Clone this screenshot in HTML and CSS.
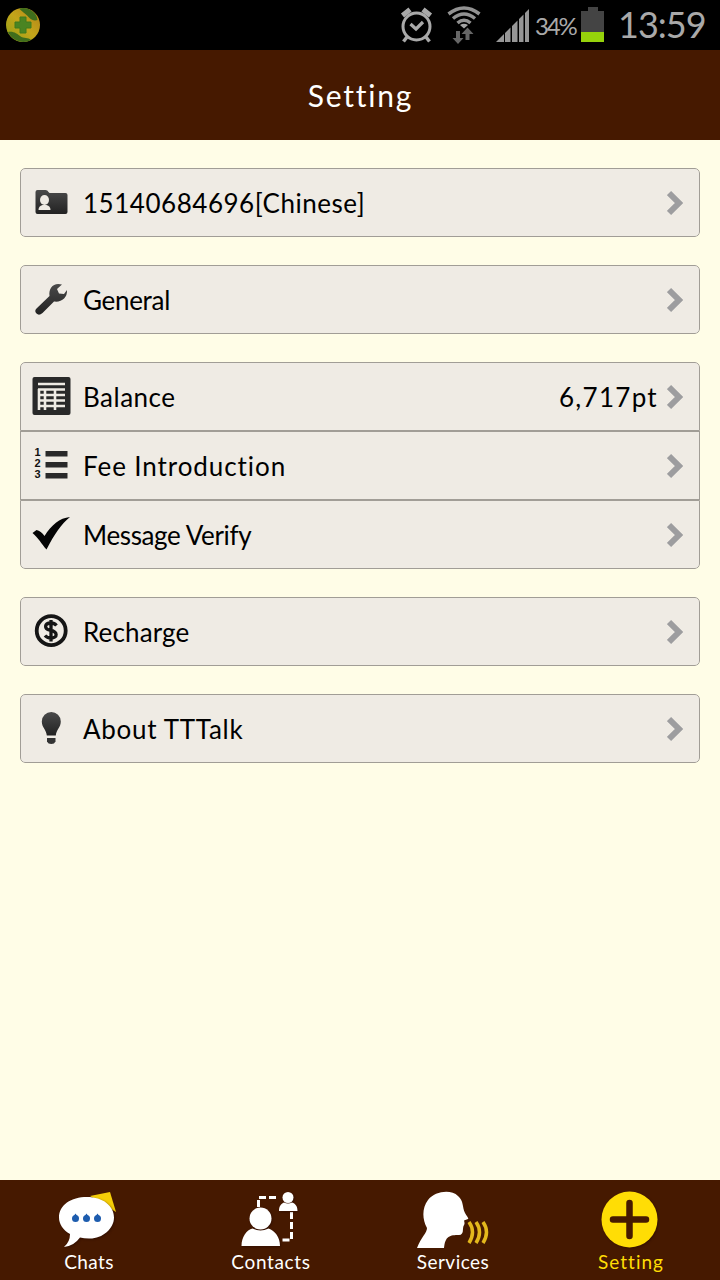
FILE: index.html
```
<!DOCTYPE html>
<html lang="en">
<head>
<meta charset="utf-8">
<title>Setting</title>
<link rel="stylesheet" href="styles.css">
</head>
<body>
<svg class="defs" aria-hidden="true">
  <defs>
    <linearGradient id="ball" x1="0" y1="1" x2="1" y2="0"><stop offset="0" stop-color="#8fa016"/><stop offset=".5" stop-color="#c4a51a"/><stop offset="1" stop-color="#b08018"/></linearGradient>
    <linearGradient id="dark" x1="0" y1="0" x2="0" y2="1"><stop offset="0" stop-color="#4a4a4a"/><stop offset="1" stop-color="#222"/></linearGradient>
    <symbol id="chevron" viewBox="0 0 16 26"><path d="M2 3 12 13 2 23" fill="none" stroke="#9d9d9f" stroke-width="6"/></symbol>
  </defs>
</svg>
<div class="screen">
  <div class="status">
    <svg class="app-ball" width="36" height="36" viewBox="0 0 36 36">
      <circle cx="18" cy="18" r="17" fill="url(#ball)"/>
      <path d="M14 1.500C24-1 32 6 32.500 13c-3 1-6 0-8-2-3-4-6-5-10.500-9.500z" fill="#3f6d1c"/>
      <path d="M3 25c6-1 9 2 12 4 4 3 8 1 11 4-7 4-18 2-23-8z" fill="#3f6d1c"/>
      <path d="M15 10h6v5h5v6h-5v5h-6v-5h-5v-6h5z" fill="#4a8422" stroke="#3f7a1d" stroke-linejoin="round"/>
    </svg>
    <svg class="alarm" width="34" height="36" viewBox="0 0 34 36" fill="none" stroke="#a9a9a9">
      <circle cx="16.500" cy="19.500" r="13.500" stroke-width="3"/>
      <path d="M10.500 17l5.500 5 7-7" stroke-width="3.200"/>
      <path d="M2.500 8.500 10 2.500M30.500 8.500 23 2.500" stroke-width="5"/>
      <path d="M7 30l-3.500 4.500M26 30l3.500 4.500" stroke-width="3.500"/>
    </svg>
    <svg class="wifi" width="34" height="38" viewBox="0 0 34 38">
      <g fill="none" stroke="#929292" stroke-width="3.500"><path d="M1.500 8Q17-4 32.500 8M6 12.500Q17 3.500 28 12.500M10.500 17Q17 11.500 23.500 17"/></g>
      <path d="M13 19Q17 16.500 21 19L17 22.500z" fill="#a5a5a5"/>
      <path d="M9 25h4v7h3.500L11 38l-5.500-6H9zM18.500 34h4v-6h4l-6-6.500-6 6.500h4z" fill="#666"/>
    </svg>
    <svg class="signal" width="34" height="34" viewBox="0 0 34 34" fill="#979797"><path d="M0 33l8-8v8zM9 24l5.500-5.500V33H9zM16 17l5.500-5.500V33H16zM23 10l4.500-4.500V33H23zM29 4l4-4v33h-4z"/></svg>
    <span class="percent">34%</span>
    <svg class="battery" width="24" height="36" viewBox="0 0 24 36"><path d="M7 0h10v4h6v21H0V4h7z" fill="#444"/><path d="M0 25h23v10H0z" fill="#96d20b"/></svg>
    <span class="clock">13:59</span>
  </div>
  <header class="title"><span>Setting</span></header>
  <main class="content">
    <section class="group">
      <div class="row">
        <svg class="icon" width="40" height="40" viewBox="0 0 40 40"><path d="M4 10q0-2 2-2h8q2 0 3 2l1 1h16q2 0 2 2v17q0 2-2 2H6q-2 0-2-2z" fill="url(#dark)"/><ellipse cx="13" cy="18" rx="4.500" ry="5" fill="#efebe4"/><path d="M7 28q0-4 4-5h4q4 1 4 5z" fill="#efebe4"/></svg>
        <span class="label account">15140684696[Chinese]</span><svg class="chevron"><use href="#chevron"/></svg>
      </div>
    </section>
    <section class="group">
      <div class="row">
        <svg class="icon" width="40" height="40" viewBox="0 0 40 40"><path d="M5 29.500 18 17C17 9 22 3 30.500 5.500L25.500 10l2 4.500 5 .5 3-4C36 19 30 23.500 22.500 22.500L11 34Q7.500 37 5 34.500T5 29.500z" fill="url(#dark)"/></svg>
        <span class="label general">General</span><svg class="chevron"><use href="#chevron"/></svg>
      </div>
    </section>
    <section class="group">
      <div class="row">
        <svg class="icon" width="40" height="40" viewBox="0 0 40 40"><rect x="1" y="1" width="38" height="38" rx="2" fill="#292929"/><path d="M6.500 8h27M6.500 13.500h27M6.500 19h27M6.500 24.500h27M6.500 30h27M7.500 13v21M13.500 13v21M23.500 13v21" fill="none" stroke="#efebe4" stroke-width="2.600"/></svg>
        <span class="label balance">Balance</span><span class="value">6,717pt</span><svg class="chevron"><use href="#chevron"/></svg>
      </div>
      <div class="row">
        <svg class="icon" width="40" height="40" viewBox="0 0 40 40"><path d="M14 6h22v5.500H14zM14 17h22v5.500H14zM14 28h22v5.500H14z" fill="#292929"/><g class="nums"><text x="3" y="11">1</text><text x="3" y="22">2</text><text x="3" y="33">3</text></g></svg>
        <span class="label fee">Fee Introduction</span><svg class="chevron"><use href="#chevron"/></svg>
      </div>
      <div class="row">
        <svg class="icon" width="40" height="40" viewBox="0 0 40 40"><path d="M1 19 5 16q4.500 1 8 6C20 11 28 4 38.500 3 30 10 23 20 15 35.500 10 30 7 24 1 19z" fill="#050505"/></svg>
        <span class="label verify">Message Verify</span><svg class="chevron"><use href="#chevron"/></svg>
      </div>
    </section>
    <section class="group">
      <div class="row">
        <svg class="icon" width="40" height="40" viewBox="0 0 40 40"><circle cx="19.700" cy="19.700" r="14.500" fill="none" stroke="#151515" stroke-width="3.800"/><path d="M25 14.500q-2-2.500-5.500-2.500c-7 0-7 6-1 7.200 8 1.500 8 7.800 1 7.800q-4 0-6-2.500M19.500 9v21.500" fill="none" stroke="#151515" stroke-width="3.300"/></svg>
        <span class="label recharge">Recharge</span><svg class="chevron"><use href="#chevron"/></svg>
      </div>
    </section>
    <section class="group">
      <div class="row">
        <svg class="icon" width="40" height="40" viewBox="0 0 40 40"><path d="M19.800 4a9.500 9.500 0 0 1 9.500 9.500c0 6-4.500 8-5 14h-9c-.5-6-5-8-5-14A9.500 9.500 0 0 1 19.800 4z" fill="url(#dark)"/><path d="M15.500 30h8.500v3.500q-1 2.500-4.200 2.500t-4.300-2.500z" fill="#333"/></svg>
        <span class="label about">About TTTalk</span><svg class="chevron"><use href="#chevron"/></svg>
      </div>
    </section>
  </main>
  <nav class="tabs">
    <div class="tab chats">
      <svg width="60" height="60" viewBox="0 0 60 60"><path d="M32 6 52 2l6 20z" fill="#f5ce08"/><path class="shade" d="M29 7c16 0 27 9 27 20.500S44 49 31 48.500q-5 0-9-1Q16 56 6 57q6-5 6-13C5 40 1 34 1 27.500 1 15 13 7 29 7z" fill="#fff"/><path d="M17.500 23.500 20 27h-5zM28.500 23.500 31 27h-5zM39.500 23.500 42 27h-5z" fill="#1d5cae"/><g fill="#1d5cae"><circle cx="17.500" cy="28.500" r="3.500"/><circle cx="28.500" cy="28.500" r="3.500"/><circle cx="39.500" cy="28.500" r="3.500"/></g></svg>
      <span>Chats</span>
    </div>
    <div class="tab contacts">
      <svg width="60" height="60" viewBox="0 0 60 60"><path d="M18.500 17V7.500H38M51.500 22v28H42" fill="none" stroke="#fff" stroke-width="3" stroke-dasharray="7 3"/><g class="shade" fill="#fff"><circle cx="20.500" cy="28.500" r="11"/><path d="M1.500 56c0-9 5-16 11-17.500q8 4 16 0C35 41 40 47 40 56z"/><circle cx="48" cy="7.500" r="5.500"/><path d="M39 21c0-5 2-7 5-8.500q4 2 8 0c4 1.500 5.500 4 5.500 8.500z"/></g></svg>
      <span>Contacts</span>
    </div>
    <div class="tab services">
      <svg width="74" height="60" viewBox="0 0 74 60"><path d="M2 58C6 47 12 43 12 38 7 29 7 18 13 10 20 1 36-1 43 6c6 5 4 11 7 17 2 4 4 5 3 6l-4 1.500q1 3 0 4.500t-1 4q0 6-4 6c-9 0-14 1-15 13z" fill="#fff"/><path d="M54 32q7 10 0 21M61 32q7 10 0 21M68 32q7 10 0 21" fill="none" stroke="#e3b81c" stroke-width="3.500"/></svg>
      <span>Services</span>
    </div>
    <div class="tab setting">
      <svg width="60" height="60" viewBox="0 0 60 60"><circle class="shade" cx="29.500" cy="29.500" r="28" fill="#ffdd05"/><path d="M29.500 13v33M13 29.500h33" stroke="#461900" stroke-width="6.500" stroke-linecap="round"/></svg>
      <span>Setting</span>
    </div>
  </nav>
</div>
</body>
</html>
```
FILE: styles.css
```
* { box-sizing: border-box; }
body { margin: 0; font-family: Lato, "Open Sans", sans-serif; font-variant-ligatures: none; color: #000; }
.defs { display: block; width: 0; height: 0; }
.screen { width: 720px; height: 1280px; display: flex; flex-direction: column; background: #fffde7; }
.status { height: 50px; flex: none; display: flex; align-items: flex-start; background: #000; color: #a9a9a9; padding-left: 5px; white-space: nowrap; }
.app-ball { margin-top: 7px; }
.alarm { margin: 7px 0 0 359px; }
.wifi { margin: 6px 0 0 13px; }
.signal { margin: 9px 0 0 15px; }
.percent { width: 46px; margin-left: 5px; font-size: 24px; line-height: 52px; letter-spacing: -2.2px; }
.battery { margin-top: 7px; }
.clock { margin-left: 13px; font-size: 36px; line-height: 49px; letter-spacing: -1px; }
.title { height: 90px; flex: none; display: flex; justify-content: center; align-items: center; background: #461900; color: #fff; font-size: 30px; letter-spacing: 1.8px; padding: 0 0 0 1px; }
.content { flex: 1; padding: 28px 20px; display: flex; flex-direction: column; gap: 28px; }
.group { border-radius: 5px; overflow: hidden; }
.row { height: 69px; display: flex; align-items: center; padding: 0 16px 0 11px; background: #efebe4; border: 1px solid #a19d96; font-size: 26px; white-space: nowrap; }
.row:first-child { border-top-left-radius: 5px; border-top-right-radius: 5px; }
.row:last-child { border-bottom-left-radius: 5px; border-bottom-right-radius: 5px; }
.icon { flex: none; margin: -1px 11px 0 -1px; padding-left: 0; transform: translateX(.5px); }
.label { flex: 1; padding: 1px 0 0 1px; }
.account { letter-spacing: .53px; }
.general { letter-spacing: -.3px; }
.balance { letter-spacing: .5px; }
.fee { letter-spacing: .92px; }
.verify { letter-spacing: -.36px; }
.recharge { letter-spacing: .15px; }
.about { letter-spacing: .7px; }
.value { margin-right: 9px; letter-spacing: 1.3px; }
.chevron { width: 16px; height: 26px; flex: none; }
.nums { font: bold 11px "Liberation Sans", sans-serif; fill: #111; }
.tabs { height: 100px; flex: none; display: grid; grid-template-columns: 182px 182px 182px 174px; background: #461900; color: #fff; font-size: 19px; overflow: hidden; }
.tab { display: flex; flex-direction: column; align-items: center; padding: 10px 6px 0 0; }
.tab span { line-height: 24px; padding-left: 2px; }
.chats span { letter-spacing: .4px; }
.contacts span { letter-spacing: .65px; }
.services span { letter-spacing: .5px; }
.tab.setting { color: #ffdd05; }
.setting span { letter-spacing: 1px; }
.shade { filter: drop-shadow(1px 1px 1px #2208008c); }
```
